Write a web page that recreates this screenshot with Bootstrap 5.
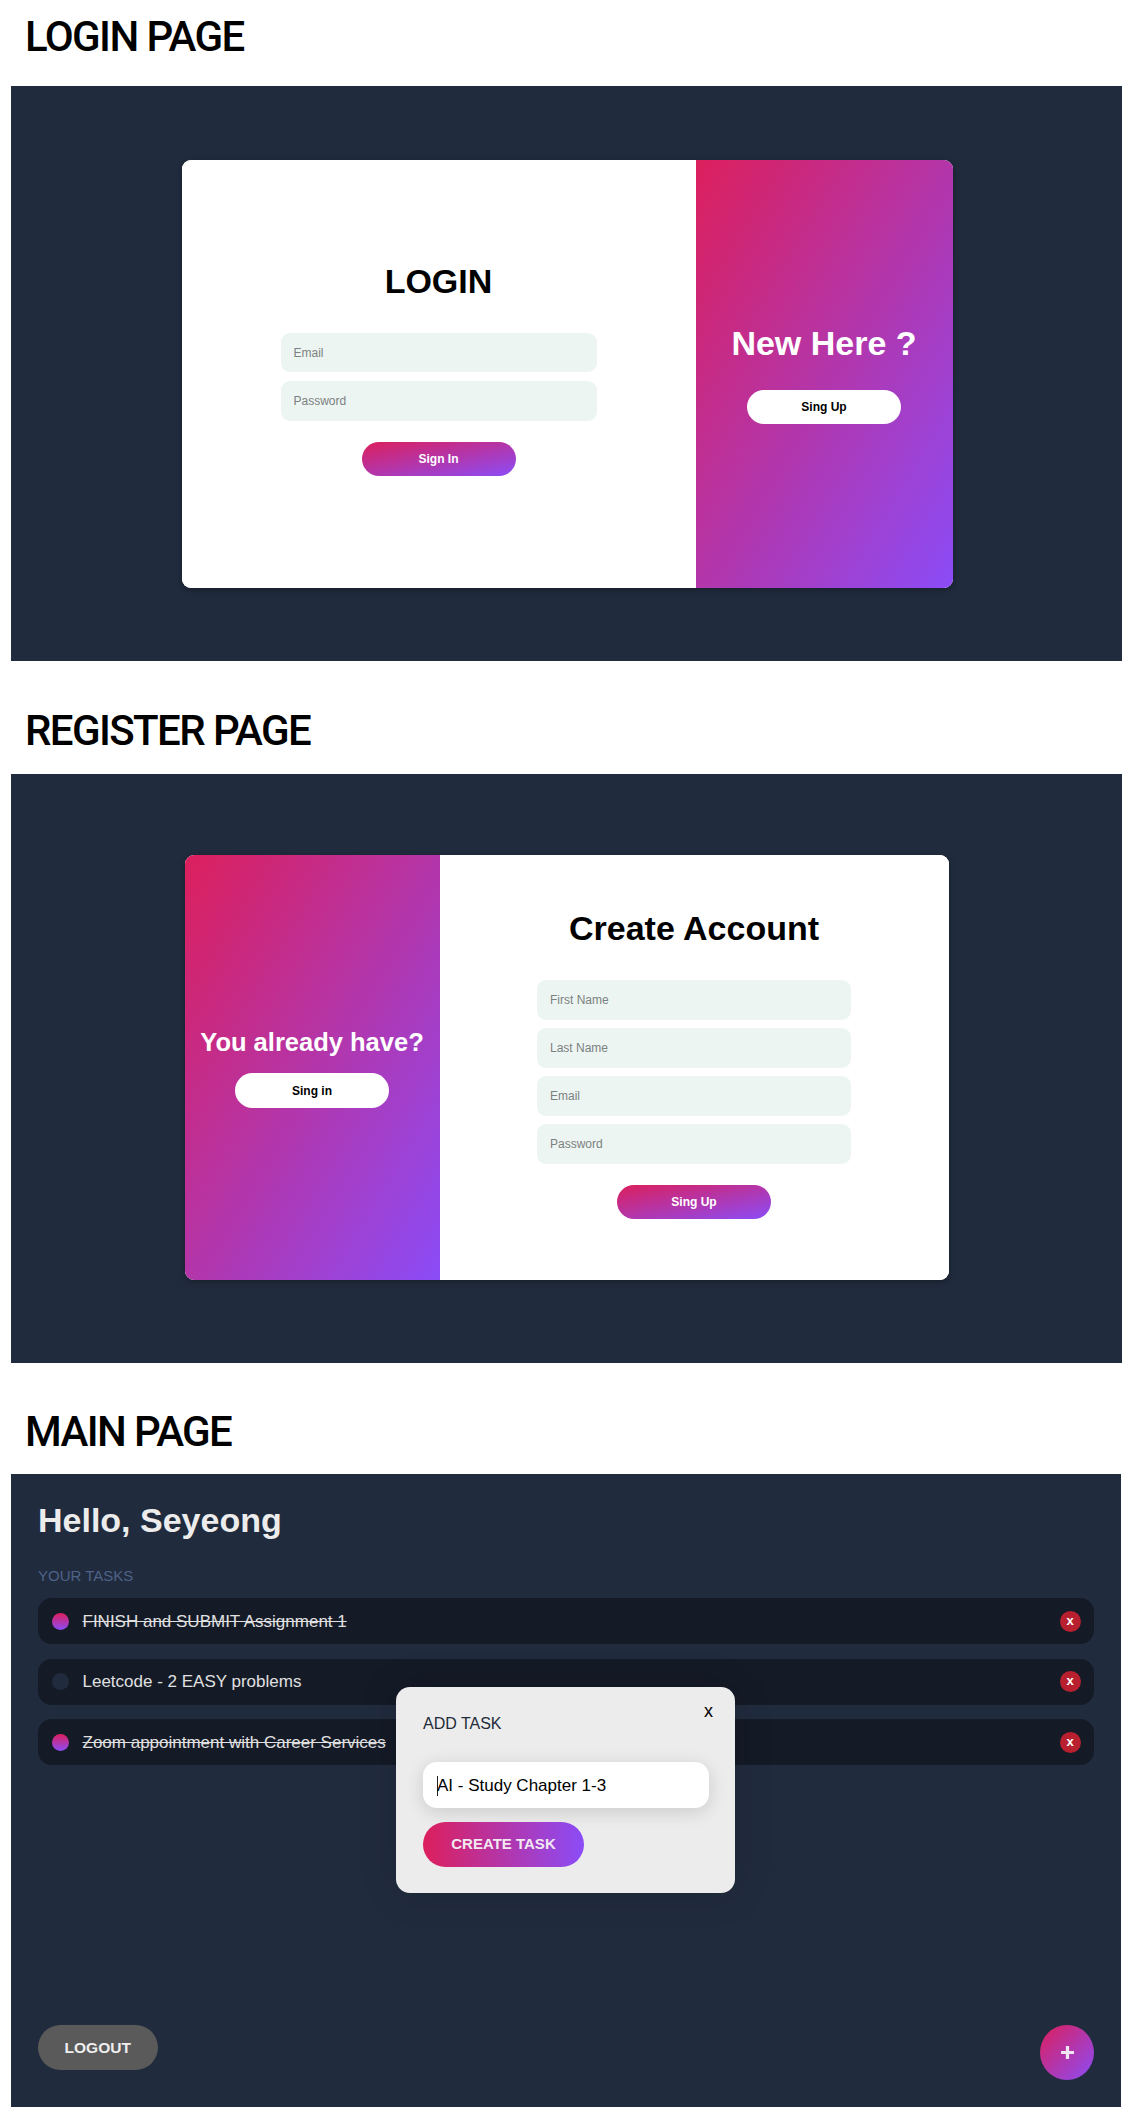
<!DOCTYPE html>
<html lang="en">
<head>
<meta charset="utf-8">
<title>Pages</title>
<link href="https://cdn.jsdelivr.net/npm/bootstrap@5.3.0/dist/css/bootstrap.min.css" rel="stylesheet">
<style>
body{background:#fff;color:#000;font-family:"Liberation Sans",Arial,sans-serif;height:2108px;overflow:hidden}
.page-title{font-family:Roboto,sans-serif;font-weight:500;font-size:42px;line-height:50px;margin:0;padding-left:25px;color:#000;letter-spacing:-1.6px}
.title-login{height:86px;padding-top:12px}
.title-register{height:113px;padding-top:45px}
.title-main{height:111px;padding-top:44px}
.stage{margin-left:11px;background:#202b3d}
.stage-login{height:575px;padding-left:1px}
.stage-register{height:589px;padding-bottom:2px}
.stage-main{height:633px;width:1110px;position:relative;padding:0 27px 37px 27px}
.auth-shell{border-radius:9px;box-shadow:0 2px 6px rgba(0,0,0,.3);background:#fff}
.shell-login{width:771px;height:428px}
.shell-register{width:764px;height:425px}
.form-pane{background:#fff}
.pane-login{width:514px;padding-bottom:10px}
.pane-register{width:509px;padding-bottom:8px}
.side-pane{background:linear-gradient(to bottom right,#dc1f5c,#8b4cf7);color:#fff}
.side-login{width:257px}
.side-register{width:255px}
.auth-heading{font-size:34px;font-weight:700;line-height:40px;margin:0;color:#000}
.side-heading{font-size:34px;font-weight:700;line-height:40px;margin:0 0 27px;color:#fff}
.side-register .side-heading{font-size:25.5px;line-height:30px;margin-bottom:16px}
.field-stack{margin-top:32px}
.pane-login .field-stack{gap:9px}
.pane-register .field-stack{gap:8.5px}
.auth-input{display:block;height:39.5px;background:#edf5f3;border:0;border-radius:9px;padding:0 13px;font-size:12px;font-family:inherit;color:#333;outline:0}
.auth-input::placeholder{color:#7b8180;opacity:1}
.pane-login .auth-input{width:316px}
.pane-register .auth-input{width:314px}
.pill{width:154px;height:34.5px;border:0;border-radius:18px;font-size:12px;font-weight:700;font-family:inherit;padding:0}
.pill-grad{background:linear-gradient(to bottom right,#dc1f5c,#8b4cf7);color:#fff;margin-top:21px}
.pill-white{background:#fff;color:#000}
.hello{font-size:34px;font-weight:700;line-height:40px;margin:26px 0 0;color:#ececec}
.tasks-label{font-size:15px;line-height:18px;margin:27px 0 13px;color:#4f6288}
.task-list{gap:14.5px}
.task-row{height:46px;background:#141a26;border-radius:14px;padding:0 13.5px 0 14px;color:#e0e0e0;font-size:17px}
.dot{width:17px;height:17px;border-radius:50%;flex:none;margin-right:13.5px;background:#202b3d}
.dot-done{background:linear-gradient(180deg,#dc1f5c,#8b4cf7)}
.task-text{flex:1;padding-top:1px}
.task-done{text-decoration:line-through}
.del{width:21px;height:21px;border-radius:50%;background:#b8202f;color:#fff;font-size:13px;font-weight:700;line-height:20px;text-align:center;flex:none}
.logout{width:119.5px;height:44.5px;border:0;border-radius:23px;background:#5a5a5a;color:#eee;font-size:15.5px;font-weight:700;font-family:inherit;padding:0}
.add-fab{width:54px;height:55px;border:0;background:linear-gradient(to bottom right,#dc1f5c,#8b4cf7);padding:0;margin-bottom:-10px}
.task-dialog{position:absolute;left:385px;top:212.5px;width:339px;height:206px;background:#ececec;border-radius:14px;box-shadow:0 0 40px rgba(0,0,0,.12);padding:0 27px;color:#222b3a}
.dialog-title{font-size:16px;line-height:20px;font-weight:400;margin:27px 0 28.5px}
.dialog-x{position:absolute;right:22px;top:14px;font-size:18px;line-height:20px;color:#000}
.task-field{height:46px;background:#fff;border-radius:14px;box-shadow:0 4px 18px rgba(0,0,0,.14);padding:1px 0 0 14px;font-size:17px;color:#000;width:285.5px}
.caret-bar{width:1px;height:20px;background:#222;margin-right:-1px}
.create-btn{margin-top:14px;width:161px;height:44.5px;border:0;border-radius:23px;background:linear-gradient(90deg,#dc1f5c,#8b4cf7);color:#f2e8f2;font-size:15px;font-weight:700;font-family:inherit;padding:0}
</style>
</head>
<body class="m-0">
<h1 class="page-title title-login">LOGIN PAGE</h1>
<section class="stage stage-login d-flex align-items-center justify-content-center">
  <div class="auth-shell shell-login d-flex overflow-hidden">
    <div class="form-pane pane-login d-flex flex-column align-items-center justify-content-center">
      <h2 class="auth-heading">LOGIN</h2>
      <div class="field-stack d-flex flex-column">
        <input class="auth-input form-control" type="text" placeholder="Email">
        <input class="auth-input form-control" type="text" placeholder="Password">
      </div>
      <button class="pill pill-grad d-flex align-items-center justify-content-center" type="button">Sign In</button>
    </div>
    <div class="side-pane side-login d-flex flex-column align-items-center justify-content-center">
      <h2 class="side-heading">New Here ?</h2>
      <button class="pill pill-white d-flex align-items-center justify-content-center" type="button">Sing Up</button>
    </div>
  </div>
</section>
<h1 class="page-title title-register">REGISTER PAGE</h1>
<section class="stage stage-register d-flex align-items-center justify-content-center">
  <div class="auth-shell shell-register d-flex overflow-hidden">
    <div class="side-pane side-register d-flex flex-column align-items-center justify-content-center">
      <h2 class="side-heading">You already have?</h2>
      <button class="pill pill-white d-flex align-items-center justify-content-center" type="button">Sing in</button>
    </div>
    <div class="form-pane pane-register d-flex flex-column align-items-center justify-content-center">
      <h2 class="auth-heading">Create Account</h2>
      <div class="field-stack d-flex flex-column">
        <input class="auth-input form-control" type="text" placeholder="First Name">
        <input class="auth-input form-control" type="text" placeholder="Last Name">
        <input class="auth-input form-control" type="text" placeholder="Email">
        <input class="auth-input form-control" type="text" placeholder="Password">
      </div>
      <button class="pill pill-grad d-flex align-items-center justify-content-center" type="button">Sing Up</button>
    </div>
  </div>
</section>
<h1 class="page-title title-main">MAIN PAGE</h1>
<section class="stage stage-main d-flex flex-column">
  <h2 class="hello">Hello, Seyeong</h2>
  <p class="tasks-label">YOUR TASKS</p>
  <div class="task-list d-flex flex-column">
    <div class="task-row d-flex align-items-center"><span class="dot dot-done"></span><span class="task-text task-done">FINISH and SUBMIT Assignment 1</span><span class="del">x</span></div>
    <div class="task-row d-flex align-items-center"><span class="dot"></span><span class="task-text">Leetcode - 2 EASY problems</span><span class="del">x</span></div>
    <div class="task-row d-flex align-items-center"><span class="dot dot-done"></span><span class="task-text task-done">Zoom appointment with Career Services</span><span class="del">x</span></div>
  </div>
  <div class="mt-auto d-flex justify-content-between align-items-start">
    <button class="logout" type="button">LOGOUT</button>
    <button class="add-fab rounded-circle d-flex align-items-center justify-content-center" type="button" aria-label="Add task"><svg width="13" height="13" viewBox="0 0 13 13"><path d="M4.9 0h3.2v4.9H13v3.2H8.1V13H4.9V8.1H0V4.9h4.9z" fill="#f0e6f2"/></svg></button>
  </div>
  <div class="task-dialog">
    <span class="dialog-x">x</span>
    <h3 class="dialog-title">ADD TASK</h3>
    <div class="task-field d-flex align-items-center"><span class="caret-bar"></span>AI - Study Chapter 1-3</div>
    <button class="create-btn d-flex align-items-center justify-content-center" type="button">CREATE TASK</button>
  </div>
</section>
<script src="https://cdn.jsdelivr.net/npm/bootstrap@5.3.0/dist/js/bootstrap.bundle.min.js"></script>
</body>
</html>
